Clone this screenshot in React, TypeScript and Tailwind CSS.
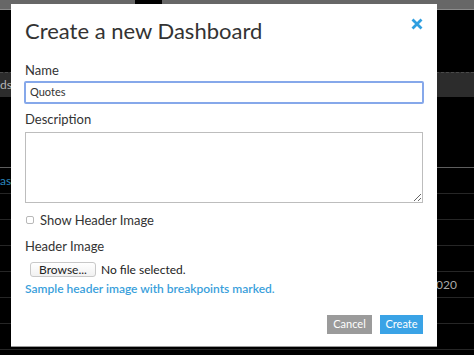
export default function App() {
  const rows = [
    { left: "as", leftClass: "text-[#2a86bd]", right: "" },
    { left: "", leftClass: "", right: "" },
    { left: "", leftClass: "", right: "" },
    { left: "", leftClass: "", right: "" },
    { left: "", leftClass: "", right: "2020" },
    { left: "", leftClass: "", right: "" },
    { left: "", leftClass: "", right: "" },
  ];
  return (
    <div className="relative w-[474px] h-[355px] overflow-hidden bg-black font-['Lato',sans-serif]">
      {/* background page */}
      <div className="flex flex-col">
        <div className="h-[10px] bg-[#676767] border-b border-[#8c8c8c] flex">
          <div className="w-[135px]" />
          <div className="w-[27px] bg-black" />
        </div>
        <div className="h-[62px]" />
        <div className="h-[25px] bg-[#2c2c2c] border-t border-dashed border-[#4a4a4a] flex items-center text-[12px] text-[#b5b5b5]">
          <span className="leading-none">ds</span>
        </div>
        <div className="h-[70px]" />
        <div className="border-t border-[#5e5e5e] flex flex-col">
          {rows.map((r, i) => (
            <div
              key={i}
              className="h-[26px] border-b border-[#262626] flex items-center justify-between text-[12px]"
            >
              <span className={r.leftClass}>{r.left}</span>
              <span className="text-[#a8a8a8] mr-[17px]">{r.right}</span>
            </div>
          ))}
        </div>
      </div>

      {/* modal */}
      <div className="absolute left-[11px] top-[4px] w-[426px] h-[343px] bg-white border-b border-[#9a9a9a] px-[14px] flex flex-col text-[#333]">
        <div className="flex justify-between items-start pt-[14px]">
          <h1 className="mt-[2px] text-[22px] leading-[22px] font-normal text-[#333]">
            Create a new Dashboard
          </h1>
          <svg width="12" height="12" viewBox="0 0 12 12">
            <path d="M1.5 1.5 L10.5 10.5 M10.5 1.5 L1.5 10.5" stroke="#2f9fe0" strokeWidth="2.8" strokeLinecap="butt" />
          </svg>
        </div>

        <label className="mt-[20px] text-[13px] leading-[16px]">Name</label>
        <div className="mt-[3px] -mx-[1px] h-[23px] border-2 border-[#86a8ea] rounded-[2px] flex items-center px-[4px] text-[11px] text-[#333]">
          Quotes
        </div>

        <label className="mt-[7px] text-[13px] leading-[16px]">Description</label>
        <textarea className="mt-[5px] h-[71px] w-full border border-[#bdbdbd] rounded-none outline-none" />

        <div className="mt-[9px] flex items-center h-[16px]">
          <span className="ml-[1px] w-[8px] h-[8px] border border-[#b8b8b8] rounded-[2px] bg-white" />
          <span className="ml-[6px] text-[13px] leading-[16px]">Show Header Image</span>
        </div>

        <label className="mt-[10px] text-[13px] leading-[16px]">Header Image</label>

        <div className="mt-[8px] flex items-center">
          <span className="ml-[5px] w-[66px] h-[15px] border border-[#c8c8c8] rounded-[3px] bg-gradient-to-b from-white to-[#f1f1f1] flex items-center justify-center text-[12px] leading-none text-[#222]">
            Browse...
          </span>
          <span className="ml-[5px] text-[12px] leading-none text-[#222]">No file selected.</span>
        </div>

        <a className="mt-[5px] text-[12px] leading-[14px] font-semibold text-[#3a9fdb]">
          Sample header image with breakpoints marked.
        </a>

        <div className="mt-[19px] flex justify-end gap-[8px]">
          <span className="w-[45px] h-[19px] bg-[#9b9b9b] text-white text-[11px] flex items-center justify-center">
            Cancel
          </span>
          <span className="w-[43px] h-[19px] bg-[#3aa3e6] text-white text-[11px] flex items-center justify-center">
            Create
          </span>
        </div>
      </div>
    </div>
  );
}
